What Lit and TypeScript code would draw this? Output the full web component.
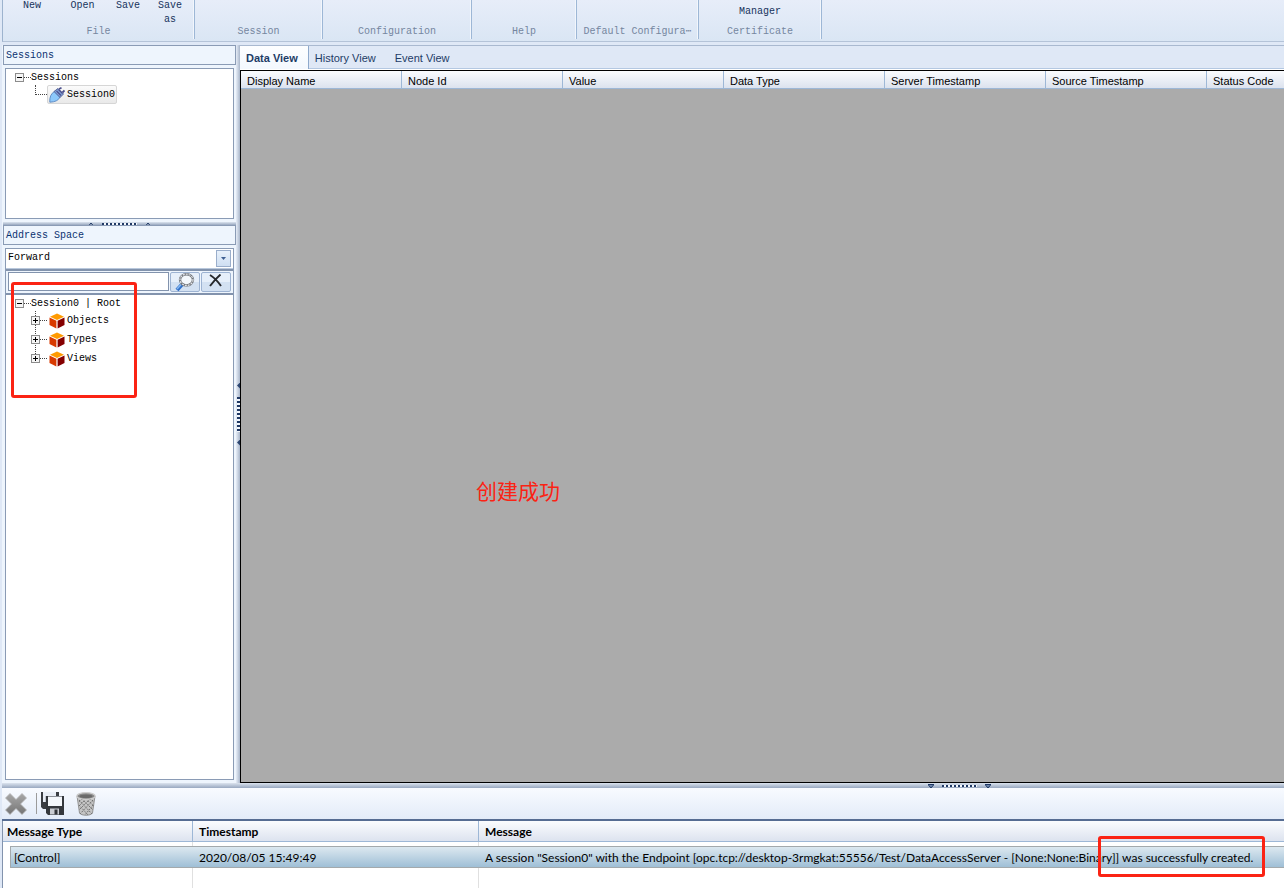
import { LitElement, html, css, svg, nothing } from "lit";
import { customElement, state } from "lit/decorators.js";

const magnifier = html`<svg width="20" height="20" viewBox="0 0 20 20" aria-hidden="true">
  <path d="M2 17 L7 11.5" stroke="#2f6fc8" stroke-width="4"/>
  <path d="M2 16 L6.5 11" stroke="#86b8f2" stroke-width="1.5"/>
  <ellipse cx="11.5" cy="6.8" rx="6.5" ry="5.6" fill="#f4f8fc" stroke="#6c7076" stroke-width="2.4"/>
  <ellipse cx="11.5" cy="6.8" rx="6.5" ry="5.6" fill="none" stroke="#e4e6ea" stroke-width="1.2" stroke-dasharray="2 1"/>
</svg>`;

const cross = html`<svg width="14" height="16" viewBox="0 0 14 16" aria-hidden="true">
  <path d="M1 1 C5 3.5 9 7.5 12 12 M11.5 0.5 C8 3.5 4 8 1 12" fill="none" stroke="#26282c" stroke-width="1.9"/>
</svg>`;

const cube = html`<svg width="16" height="16" viewBox="0 0 16 16" aria-hidden="true">
  <path d="M8 0.5 L15 3.7 L8 7 L1 3.7 Z" fill="#ff9a00"/>
  <path d="M0.5 4.6 L7.4 7.8 V15.5 L0.5 12 Z" fill="#d83a00"/>
  <path d="M15.5 4.6 L8.6 7.8 V15.5 L15.5 12 Z" fill="#850000"/>
</svg>`;

const plug = html`<svg width="16" height="16" viewBox="0 0 16 16" aria-hidden="true">
  <path d="M0.8 15.2 C0.5 10 2 6.5 5.5 4.5 L11 10 C9.5 13.5 6 15 0.8 15.2 Z" fill="#8cc8fb" stroke="#5a86c0" stroke-width="0.9"/>
  <path d="M5 4.5 L9 1.5 L14.5 7 L11 10.5 Z" fill="#7f9fd8" stroke="#4c5a92" stroke-width="0.9"/>
  <path d="M7.5 4 L12 8.5 M9.5 2.5 L13.5 6.5" stroke="#4b4f8c" stroke-width="1.1"/>
  <path d="M10 2 L12.5 0.8 M13.5 5.5 L15.5 3.5" stroke="#4b4f8c" stroke-width="1.8"/>
</svg>`;

const bigCross = html`<svg width="22" height="22" viewBox="0 0 22 22" aria-hidden="true">
  <defs><linearGradient id="x" x1="0" y1="0" x2="0" y2="1"><stop offset="0" stop-color="#a8a8a8"/><stop offset="1" stop-color="#757575"/></linearGradient></defs>
  <path d="M5 0.5 L11 6.5 L17 0.5 L21.5 5 L15.5 11 L21.5 17 L17 21.5 L11 15.5 L5 21.5 L0.5 17 L6.5 11 L0.5 5 Z" fill="url(#x)" stroke="#b4b4b4" stroke-width="0.8"/>
</svg>`;

const disks = html`<svg width="23" height="23" viewBox="0 0 23 23" aria-hidden="true">
  <path d="M0 0 H18 V17 H2 L0 15 Z" fill="#3a3d42"/>
  <path d="M2 0 H15 V10 H2 Z" fill="#e9eef6"/>
  <path d="M5 4 H23 V23 H7 L5 21 Z" fill="#34373c"/>
  <path d="M7 4 H21 V14 H7 Z" fill="#f4f7fb"/>
  <path d="M5.8 4 V15 M22 4 V15" stroke="#34373c" stroke-width="2"/>
  <path d="M7 4.5 H21" stroke="#8b8f96"/>
  <path d="M9 16.5 H18 V22.5 H9 Z" fill="#c9ccd2"/>
  <path d="M13.5 17.5 H16.5 V22.5 H13.5 Z" fill="#303338"/>
</svg>`;

const bin = html`<svg width="20" height="24" viewBox="0 0 20 24" aria-hidden="true">
  <path d="M1 4 L3.5 21 C5 24 15 24 16.5 21 L19 4 Z" fill="#c4c4c4" stroke="#808080" stroke-width="0.8"/>
  <path d="M3 8 L16 22 M3 13 L12 23 M6 7 L17 18 M10 7 L18 14 M14 7 L18 10 M17 8 L4 22 M17 13 L9 23 M14 7 L3 18 M10 7 L3 14 M6 7 L3 10" stroke="#707070" stroke-width="1" stroke-dasharray="1.5 1"/>
  <ellipse cx="10" cy="4" rx="9.2" ry="3.4" fill="#8b8b8b" stroke="#cfcfcf" stroke-width="1.2"/>
  <ellipse cx="10" cy="4.2" rx="6.5" ry="1.8" fill="#6a6a6a"/>
</svg>`;

const marker = (direction: string) => html`<svg width="6" height="4" viewBox="0 0 6 4" aria-hidden="true">
  <path d=${direction === "up" ? "M0.5 4 L3 1 L5.5 4" : "M0 0.5 H6 L3 4 Z"} fill=${direction === "up" ? "none" : "#6f87ad"} stroke="#1f3864" stroke-width="1"/>
</svg>`;

const grip = (direction: string) => html`${marker(direction)}<span class="dots"></span>${marker(direction)}`;

const expander = (open: boolean) => html`<svg width="9" height="9" viewBox="0 0 9 9" aria-hidden="true">
  <rect x="0.5" y="0.5" width="8" height="8" fill="#f6f6f6" stroke="#8c8c8c"/>
  <path d="M2 4.5 H7" stroke="#000"/>
  ${open ? nothing : svg`<path d="M4.5 2 V7" stroke="#000"/>`}
</svg>`;

interface RibbonGroup {
  title: string;
  kind: string;
  commands: string[];
}

const groups: RibbonGroup[] = [
  { title: "File", kind: "file", commands: ["New", "Open", "Save", "Save as"] },
  { title: "Session", kind: "session", commands: ["Connect", "Disconnect"] },
  { title: "Configuration", kind: "configuration", commands: [] },
  { title: "Help", kind: "help", commands: [] },
  { title: "Default Configura⋯", kind: "default", commands: [] },
  { title: "Certificate", kind: "certificate", commands: ["Manager"] },
];

const columns = ["Display Name", "Node Id", "Value", "Data Type", "Server Timestamp", "Source Timestamp", "Status Code"];
const tabs = ["Data View", "History View", "Event View"];
const nodes = ["Objects", "Types", "Views"];

@customElement("app-root")
export class AppRoot extends LitElement {
  @state() private tab = "Data View";

  static styles = css`
    :host {
      display: flex;
      flex-direction: column;
      height: 100vh;
      position: relative;
      overflow: hidden;
      padding-left: 2px;
      box-sizing: border-box;
      background: #dfe8f6;
      color: #000;
      font: 10px/14px "Liberation Mono", monospace;
    }
    *, *::before { box-sizing: border-box; }
    button, input, select { font: inherit; color: inherit; margin: 0; padding: 0; border: 0; border-radius: 0; background: none; }
    table { border-collapse: separate; border-spacing: 0; table-layout: fixed; width: 100%; }
    th, td { padding: 0; text-align: left; white-space: nowrap; overflow: hidden; }
    svg { display: block; flex: none; }

    .ribbon {
      display: flex;
      flex: none;
      height: 42px;
      overflow: hidden;
      border-left: 1px solid #9db3ce;
      border-bottom: 1px solid #b4c3d8;
      background: linear-gradient(#e7edf9, #dae6f4);
    }
    .group {
      display: flex;
      flex-direction: column;
      justify-content: space-between;
      height: 39px;
      border-right: 1px solid #9db7d6;
      box-shadow: inset -1px 0 #f2f6fc;
    }
    .file { width: 192px; }
    .session { width: 128px; }
    .configuration { width: 149px; }
    .help { width: 105px; }
    .default { width: 122px; }
    .certificate { width: 123px; }
    .commands { display: flex; justify-content: center; height: 25px; color: #17335c; }
    .commands button { align-self: flex-end; color: #17335c; }
    .file .commands { display: grid; grid-template-columns: 58px 43px 48px 36px; justify-content: start; }
    .file .commands button { align-self: start; margin-top: -1px; }
    .session .commands { gap: 8px; }
    .session .commands button { align-self: start; margin-top: -9px; }
    .certificate .commands { padding-bottom: 6px; }
    .group-title { text-align: center; color: #75869f; line-height: 14px; white-space: nowrap; }

    .main { display: flex; flex: 1; min-height: 0; margin-top: 3px; }
    .side {
      display: flex;
      flex-direction: column;
      width: 234px;
      flex: none;
      padding-left: 1px;
      background: #eef5fd;
    }
    .caption {
      margin: 0;
      height: 20px;
      flex: none;
      padding: 0 2px;
      font: inherit;
      line-height: 19px;
      color: #0a3270;
      background: #eef5fd;
      border: 1px solid #8a9bb5;
    }
    .pane { margin: 3px 2px 3px 2px; border: 1px solid #8a9bb5; background: #fff; }
    .sessions { height: 151px; flex: none; }
    .address { display: flex; flex-direction: column; flex: 1; min-height: 0; }

    .bar {
      display: flex;
      flex: none;
      align-items: center;
      justify-content: center;
      gap: 8px;
      height: 3px;
      background: linear-gradient(#dbe3ee, #98a8c0);
    }
    .dots { width: 35px; height: 2px; background: repeating-linear-gradient(90deg, #1f3864 0 2px, #f4f8fd 2px 4px); }

    .tree { list-style: none; margin: 0; padding: 0; }
    .tree .tree { padding-left: 16px; }
    .tree.root { padding: 1px 0 0 9px; }
    .node { display: flex; align-items: center; height: 15px; }
    .stub { width: 7px; border-top: 1px dotted #444; flex: none; }
    .leaf { display: flex; align-items: center; gap: 2px; height: 19px; }
    .picked { padding: 0 1px; border: 1px solid #d6d6d6; border-radius: 2px; background: linear-gradient(#fbfbfb, #e9e9e9); }
    .elbow { width: 12px; height: 10px; margin-left: 4px; align-self: flex-start; border: dotted #444; border-width: 0 0 1px 1px; }
    .child { display: flex; align-items: center; height: 19px; }
    .branches { background: repeating-linear-gradient(#444 0 1px, transparent 1px 2px) 20px 0 / 1px 46px no-repeat; }
    .stub + .leaf { padding-left: 2px; }

    .combo { display: grid; grid-template-columns: 1fr 17px; height: 20px; flex: none; border-bottom: 1px solid #b9c8dc; }
    .combo select { grid-area: 1 / 1 / 2 / 3; appearance: none; padding: 0 20px 2px 2px; width: 100%; }
    .arrow {
      grid-area: 1 / 2;
      align-self: center;
      display: grid;
      place-items: center;
      width: 15px;
      height: 17px;
      border: 1px solid #9aaecb;
      background: linear-gradient(#e8f1fb, #cfdff2);
      pointer-events: none;
    }
    .search { display: flex; flex: none; height: 26px; padding: 1px 2px 2px; gap: 1px; border: solid #8293ad; border-width: 2px 0; background: #eef5fd; }
    .search input { flex: 1; min-width: 0; border: 1px solid #8293ad; background: #fff; padding: 0 3px; }
    .search button { display: grid; place-items: center; width: 30px; height: 20px; border: 1px solid #9db3d2; border-radius: 2px; background: linear-gradient(#e6effa 50%, #d3e1f2 50%); }

    .divider { display: flex; flex-direction: column; align-items: flex-end; justify-content: center; gap: 8px; width: 4px; flex: none; background: linear-gradient(90deg, #e6edf7, #a9b6ca); }
    .divider i { width: 3px; height: 6px; background: #2b4570; clip-path: polygon(100% 0, 0 50%, 100% 100%); }
    .divider b { width: 3px; height: 35px; background: repeating-linear-gradient(#1f3864 0 2px, #f4f8fd 2px 4px); }

    .view { display: flex; flex-direction: column; flex: 1; min-width: 0; font: 11px/14px "Liberation Sans", Arial, sans-serif; }
    .tabs { display: flex; flex: none; height: 25px; border-top: 1px solid #a9b9d0; border-bottom: 1px solid #fff; box-shadow: inset 0 -1px #b4c8e2; }
    .tabs button { padding: 0 10px 0 6px; color: #1e3c66; }
    .tabs button + button + button { padding-left: 9px; }
    .tabs button.current { font-weight: bold; background: linear-gradient(#fdfeff, #f3f8fe); border-right: 1px solid #8ea9cc; }
    .grid { flex: 1; overflow: hidden; background: #ababab; border: solid #000; border-width: 1px 0 1px 1px; }
    .grid th { height: 18px; padding: 2px 0 0 6px; font-weight: normal; border-right: 1px solid #9db7d6; border-bottom: 1px solid #9db7d6; background: linear-gradient(#fafcfe, #dce2ee); }
    .grid th:last-child { border-right: 0; }
    .c { width: 161px; }

    .wide { height: 5px; padding-left: 632px; }
    .log { flex: none; font: 12px/16px Lato, "Open Sans", sans-serif; background: #fff; }
    .tools { display: flex; align-items: center; height: 33px; border-bottom: 2px solid #566c92; background: linear-gradient(#f8fbff, #e3ebf8); padding: 0 3px; }
    .tools .rule { width: 1px; height: 21px; margin: 0 4px 0 9px; background: #9b9b9b; }
    .tools button + button { margin-left: 12px; }
    .messages { border-left: 1px solid #8293ad; height: 67px; }
    .messages th { height: 21px; padding: 1px 0 0 4px; border-right: 1px solid #9db7d6; border-bottom: 1px solid #9db7d6; background: linear-gradient(#fbfcfe, #dde3ef); font-weight: bold; }
    .messages td { padding: 2px 0 0 6px; border-right: 1px solid #e0e0e0; }
    .messages th + th { padding-left: 6px; }
    .messages th:last-child, .messages td:last-child { border-right: 0; }
    .messages .space td { height: 4px; }
    .messages .fill td { height: 20px; }
    .messages .entry td { height: 22px; border: 0; background: linear-gradient(#a3a9ac 1px, #dce8f0 1px, #9fbfd6 21px, #a3a9ac 21px); }
    .messages .entry td:first-child { padding-left: 4px; border-left: 7px solid #fff; background-clip: padding-box; box-shadow: inset 1px 0 #a3a9ac; }
    .kind { width: 190px; }
    .time { width: 286px; }

    .mark { position: absolute; border: 3px solid #fb2314; border-radius: 3px; pointer-events: none; }
    .mark-tree { left: 11px; top: 282px; width: 126px; height: 116px; }
    .mark-log { right: 19px; bottom: 11px; width: 167px; height: 41px; }
    .note { position: absolute; left: 476px; top: 476px; margin: 0; color: #fb2314; font: 21px/28px "Noto Sans CJK SC", sans-serif; }
  `;

  render() {
    return html`
      <header class="ribbon">
        ${groups.map(
          (g) => html`<section class="group ${g.kind}">
            <div class="commands">${g.commands.map((c) => html`<button>${c === "Save as" ? html`Save<br />as` : c}</button>`)}</div>
            <div class="group-title">${g.title}</div>
          </section>`
        )}
      </header>
      <main class="main">
        <aside class="side">
          <h2 class="caption">Sessions</h2>
          <div class="pane sessions">
            <ul class="tree root">
              <li>
                <div class="node">${expander(true)}<span class="stub"></span>Sessions</div>
                <ul class="tree">
                  <li class="child"><span class="elbow"></span><span class="leaf picked">${plug}Session0</span></li>
                </ul>
              </li>
            </ul>
          </div>
          <div class="bar">${grip("up")}</div>
          <h2 class="caption">Address Space</h2>
          <div class="pane address">
            <div class="combo">
              <select aria-label="Browse direction"><option>Forward</option></select>
              <span class="arrow"><svg width="5" height="3" viewBox="0 0 5 3"><path d="M0 0 H5 L2.5 3 Z" fill="#3f5f92" /></svg></span>
            </div>
            <div class="search">
              <input type="text" aria-label="Search" />
              <button aria-label="Find">${magnifier}</button>
              <button aria-label="Clear">${cross}</button>
            </div>
            <ul class="tree root">
              <li>
                <div class="node">${expander(true)}<span class="stub"></span>Session0 | Root</div>
                <ul class="tree branches">
                  ${nodes.map((n) => html`<li class="child">${expander(false)}<span class="stub"></span><span class="leaf">${cube}${n}</span></li>`)}
                </ul>
              </li>
            </ul>
          </div>
        </aside>
        <div class="divider"><i></i><b></b><i></i></div>
        <section class="view">
          <nav class="tabs">
            ${tabs.map((t) => html`<button class=${t === this.tab ? "current" : ""} @click=${() => (this.tab = t)}>${t}</button>`)}
          </nav>
          <div class="grid">
            <table>
              <colgroup>${columns.map((_, i) => html`<col class=${i < columns.length - 1 ? "c" : ""} />`)}</colgroup>
              <thead><tr>${columns.map((c) => html`<th>${c}</th>`)}</tr></thead>
            </table>
          </div>
        </section>
      </main>
      <div class="bar wide">${grip("down")}</div>
      <section class="log">
        <div class="tools">
          <button aria-label="Delete message">${bigCross}</button>
          <span class="rule"></span>
          <button aria-label="Save messages">${disks}</button>
          <button aria-label="Clear messages">${bin}</button>
        </div>
        <div class="messages">
          <table>
            <colgroup><col class="kind" /><col class="time" /><col /></colgroup>
            <thead><tr><th>Message Type</th><th>Timestamp</th><th>Message</th></tr></thead>
            <tbody>
              <tr class="space"><td></td><td></td><td></td></tr>
              <tr class="entry">
                <td>[Control]</td>
                <td>2020/08/05 15:49:49</td>
                <td>A session "Session0" with the Endpoint [opc.tcp://desktop-3rmgkat:55556/Test/DataAccessServer - [None:None:Binary]] was successfully created.</td>
              </tr>
              <tr class="fill"><td></td><td></td><td></td></tr>
            </tbody>
          </table>
        </div>
      </section>
      <div class="mark mark-tree"></div>
      <div class="mark mark-log"></div>
      <p class="note">创建成功</p>
    `;
  }
}
